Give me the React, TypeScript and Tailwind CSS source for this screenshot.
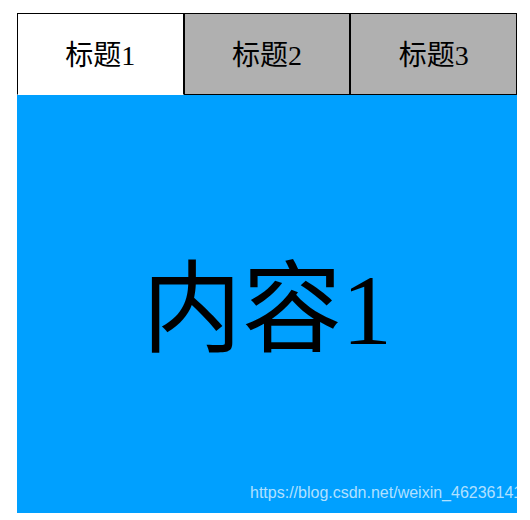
import React, { useState } from "react";

const tabs = [
  { title: "标题1", body: "内容1" },
  { title: "标题2", body: "内容2" },
  { title: "标题3", body: "内容3" },
];

export default function App() {
  const [active, setActive] = useState(0);
  return (
    <div className="min-h-[520px] w-[530px] bg-white pl-[17px] pt-[13px]">
      <div
        className="flex w-[500px] flex-col"
        style={{ fontFamily: '"Liberation Serif", "Noto Sans CJK SC", serif' }}
      >
        <div className="flex">
          {tabs.map((t, i) => (
            <button
              key={t.title}
              onClick={() => setActive(i)}
              className={
                i === active
                  ? "flex h-[82px] flex-1 items-center justify-center border border-black border-b-white bg-white pt-[3px] text-[28px] text-black"
                  : "flex h-[82px] flex-1 items-center justify-center border border-black bg-[#b0b0b0] pt-[3px] text-[28px] text-black"
              }
            >
              {t.title}
            </button>
          ))}
        </div>
        <div className="relative flex h-[418px] items-center justify-center overflow-hidden bg-[#00a0ff] pt-[14px]">
          <span className="text-[100px] leading-none text-black">{tabs[active].body}</span>
          <span
            className="absolute left-[233px] top-[390px] whitespace-nowrap text-[16px] leading-none text-white/70"
            style={{ fontFamily: '"Liberation Sans", Arial, sans-serif' }}
          >
            https://blog.csdn.net/weixin_46236141
          </span>
        </div>
      </div>
    </div>
  );
}
